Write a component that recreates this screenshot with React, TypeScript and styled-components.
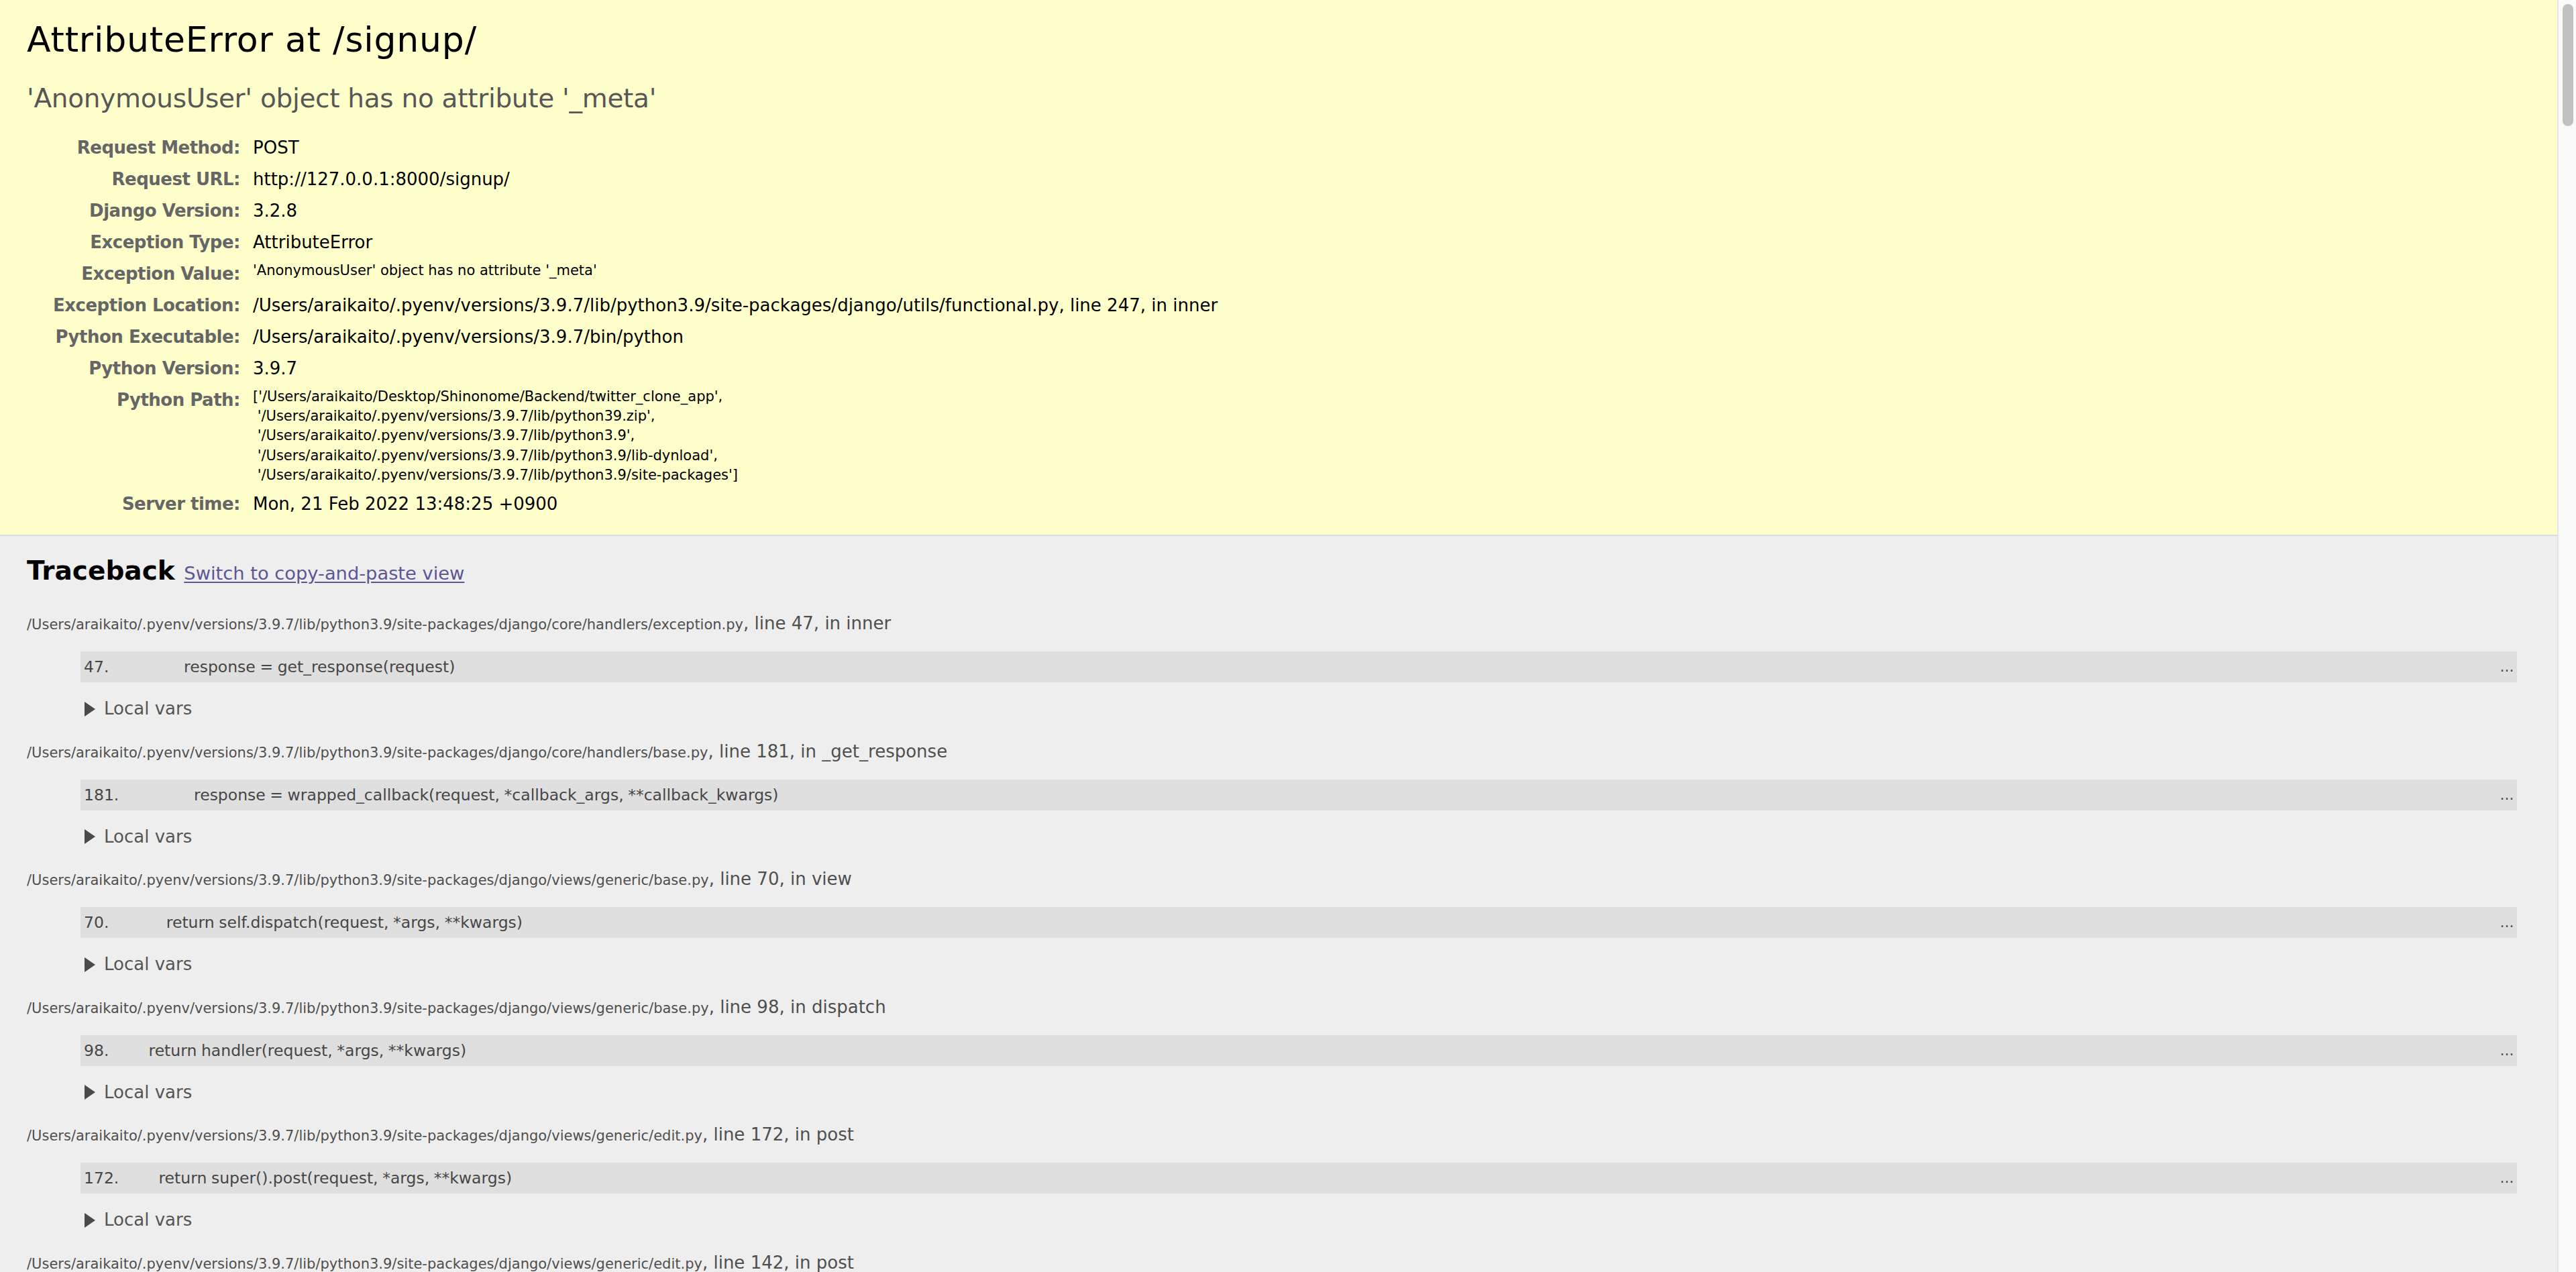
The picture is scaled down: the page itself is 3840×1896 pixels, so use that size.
import React from "react";
import styled, { createGlobalStyle } from "styled-components";

const GlobalStyle = createGlobalStyle`
  html, body {
    margin: 0;
    padding: 0;
    overflow: hidden;
    background: #ffffcc;
  }
  body {
    font-family: "DejaVu Sans", "Noto Sans CJK JP", sans-serif;
    color: #000;
  }
  * { box-sizing: content-box; }
`;

const Window = styled.div`
  display: flex;
  width: 3840px;
  height: 1896px;
  overflow: hidden;
`;

const Page = styled.main`
  flex: 1;
  min-width: 0;
  height: 1896px;
  overflow: hidden;
  display: flex;
  flex-direction: column;
`;

const Summary = styled.section`
  background: #ffffcc;
  padding: 20px 40px;
  border-bottom: 2px solid #dddddd;
`;

const Title = styled.h1`
  margin: 0;
  font-size: 52px;
  line-height: 78px;
  font-weight: normal;
  letter-spacing: 0.8px;
  color: #000;
`;

const ExceptionValue = styled.p`
  margin: 20px 0 20px 0;
  font-size: 39px;
  line-height: 58.5px;
  letter-spacing: -0.3px;
  color: #575757;
  white-space: pre-wrap;
`;

const MetaTable = styled.table`
  border: none;
  border-collapse: collapse;
  background: transparent;
  margin-bottom: 2px;
`;

const Label = styled.th`
  width: 312px;
  padding: 4px 13px 4px 6px;
  text-align: right;
  vertical-align: top;
  color: #666;
  font-weight: bold;
  font-size: 26px;
  line-height: 39px;
  letter-spacing: -0.5px;
  white-space: nowrap;
`;

const Value = styled.td`
  padding: 4px 6px;
  vertical-align: top;
  font-size: 26px;
  line-height: 39px;
  color: #000;
`;

const Pre = styled.pre`
  margin: 0;
  font-family: "DejaVu Sans", sans-serif;
  font-size: 21px;
  line-height: 29.4px;
  white-space: pre-wrap;
`;

const Traceback = styled.section`
  flex: 1;
  background: #eeeeee;
  padding: 23px 40px 20px 40px;
`;

const Heading = styled.h2`
  margin: 0 0 26px 0;
  font-size: 39px;
  line-height: 58.5px;
  font-weight: bold;
`;

const CommandLink = styled.a`
  font-size: 27.3px;
  font-weight: normal;
  color: #5e5694;
  text-decoration: underline;
  text-underline-offset: 3px;
`;

const FrameList = styled.ul`
  list-style: none;
  margin: 0;
  padding: 0;
  color: #222;
`;

const Frame = styled.li`
  padding-bottom: 24.5px;
  color: #4f4f4f;
`;

const Location = styled.div`
  font-size: 26px;
  line-height: 39px;
`;

const FileName = styled.code`
  font-family: "DejaVu Sans", sans-serif;
  font-size: 21px;
`;

const Context = styled.div`
  padding: 20px 0;
`;

const ContextLine = styled.div`
  display: flex;
  align-items: center;
  margin: 0 20px 0 80px;
  padding: 6px 4px 6px 5px;
  background: #dfdfdf;
  color: #464646;
  font-size: 23.5px;
  line-height: 34px;
  word-spacing: -0.9px;
  white-space: pre;
`;

const LineNo = styled.span``;

const Code = styled.span`
  flex: 1;
`;

const More = styled.span`
  font-size: 21px;
  letter-spacing: 0.5px;
`;

const LocalVars = styled.div`
  display: flex;
  align-items: center;
  gap: 12px;
  margin-left: 80px;
  padding-left: 5px;
  font-size: 26px;
  line-height: 39px;
  color: #555;
`;

const Scrollbar = styled.div`
  width: 28px;
  height: 1896px;
  border-left: 2px solid #e6e6e6;
  background: #fafafa;
  padding-top: 6px;
  display: flex;
  justify-content: center;
  box-sizing: border-box;
`;

const Thumb = styled.div`
  width: 16px;
  height: 182px;
  border-radius: 8px;
  background: #c1c1c1;
  margin-left: 2px;
`;

const Triangle = () => (
  <svg width="18" height="22" viewBox="0 0 18 22" aria-hidden="true">
    <path d="M1 0 L17 11 L1 22 Z" fill="#4a4a4a" />
  </svg>
);

const meta: { label: string; value: string; pre?: boolean }[] = [
  { label: "Request Method:", value: "POST" },
  { label: "Request URL:", value: "http://127.0.0.1:8000/signup/" },
  { label: "Django Version:", value: "3.2.8" },
  { label: "Exception Type:", value: "AttributeError" },
  { label: "Exception Value:", value: "'AnonymousUser' object has no attribute '_meta'", pre: true },
  {
    label: "Exception Location:",
    value:
      "/Users/araikaito/.pyenv/versions/3.9.7/lib/python3.9/site-packages/django/utils/functional.py, line 247, in inner",
  },
  { label: "Python Executable:", value: "/Users/araikaito/.pyenv/versions/3.9.7/bin/python" },
  { label: "Python Version:", value: "3.9.7" },
  {
    label: "Python Path:",
    value:
      "['/Users/araikaito/Desktop/Shinonome/Backend/twitter_clone_app',\n '/Users/araikaito/.pyenv/versions/3.9.7/lib/python39.zip',\n '/Users/araikaito/.pyenv/versions/3.9.7/lib/python3.9',\n '/Users/araikaito/.pyenv/versions/3.9.7/lib/python3.9/lib-dynload',\n '/Users/araikaito/.pyenv/versions/3.9.7/lib/python3.9/site-packages']",
    pre: true,
  },
  { label: "Server time:", value: "Mon, 21 Feb 2022 13:48:25 +0900" },
];

const base = "/Users/araikaito/.pyenv/versions/3.9.7/lib/python3.9/site-packages/django/";

const frames = [
  { file: base + "core/handlers/exception.py", line: 47, fn: "inner", code: "                response = get_response(request)" },
  {
    file: base + "core/handlers/base.py",
    line: 181,
    fn: "_get_response",
    code: "                response = wrapped_callback(request, *callback_args, **callback_kwargs)",
  },
  { file: base + "views/generic/base.py", line: 70, fn: "view", code: "            return self.dispatch(request, *args, **kwargs)" },
  { file: base + "views/generic/base.py", line: 98, fn: "dispatch", code: "        return handler(request, *args, **kwargs)" },
  { file: base + "views/generic/edit.py", line: 172, fn: "post", code: "        return super().post(request, *args, **kwargs)" },
  { file: base + "views/generic/edit.py", line: 142, fn: "post", code: "            return self.form_valid(form)" },
];

export default function App() {
  return (
    <>
      <GlobalStyle />
      <Window>
        <Page>
          <Summary>
            <Title>AttributeError at /signup/</Title>
            <ExceptionValue>'AnonymousUser' object has no attribute '_meta'</ExceptionValue>
            <MetaTable>
              <tbody>
                {meta.map((m) => (
                  <tr key={m.label}>
                    <Label>{m.label}</Label>
                    <Value>{m.pre ? <Pre>{m.value}</Pre> : m.value}</Value>
                  </tr>
                ))}
              </tbody>
            </MetaTable>
          </Summary>
          <Traceback>
            <Heading>
              Traceback <CommandLink href="#">Switch to copy-and-paste view</CommandLink>
            </Heading>
            <FrameList>
              {frames.map((f, i) => (
                <Frame key={i}>
                  <Location>
                    <FileName>{f.file}</FileName>, line {f.line}, in {f.fn}
                  </Location>
                  <Context>
                    <ContextLine>
                      <LineNo>{f.line}. </LineNo>
                      <Code>{f.code}</Code>
                      <More>…</More>
                    </ContextLine>
                  </Context>
                  <LocalVars>
                    <Triangle />
                    Local vars
                  </LocalVars>
                </Frame>
              ))}
            </FrameList>
          </Traceback>
        </Page>
        <Scrollbar>
          <Thumb />
        </Scrollbar>
      </Window>
    </>
  );
}
